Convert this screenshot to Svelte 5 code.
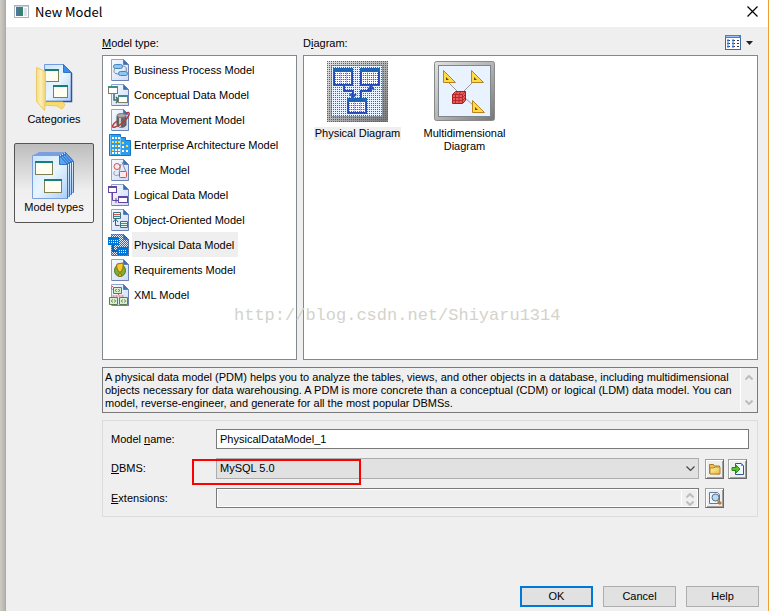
<script lang="ts">
  const types = [
    { id: 'process', label: 'Business Process Model' },
    { id: 'conceptual', label: 'Conceptual Data Model' },
    { id: 'movement', label: 'Data Movement Model' },
    { id: 'enterprise', label: 'Enterprise Architecture Model' },
    { id: 'free', label: 'Free Model' },
    { id: 'logical', label: 'Logical Data Model' },
    { id: 'object', label: 'Object-Oriented Model' },
    { id: 'physical', label: 'Physical Data Model' },
    { id: 'requirements', label: 'Requirements Model' },
    { id: 'xml', label: 'XML Model' }
  ];

  let tab = $state('types');
  let selected = $state('physical');
  let diagram = $state('physical');
  let modelName = $state('PhysicalDataModel_1');
  let dbms = $state('MySQL 5.0');
  let extensions = $state('');
</script>

<!-- Small framed window with a coloured title strip, shared by most icons -->
{#snippet box(x: number, y: number, w: number, h: number, edge: string, bar: string, fill = '#fff')}
  <rect x={x + 0.5} y={y + 0.5} width={w - 1} height={h - 1} {fill} stroke={edge} />
  <rect {x} {y} width={w} height="2" fill={bar} />
{/snippet}

{#snippet table(x: number, y: number, h: number)}
  <rect x={x + 1} y={y + 1} width="18" height={h - 2} fill="#fff" stroke="#2449b8" stroke-width="2" />
  <path d="M{x + 2} {y + 7.5}h16M{x + 2} {y + 11.5}h16M{x + 7.5} {y + 4}v{h - 6}M{x + 13.5} {y + 4}v{h - 6}" stroke="#c5c3f2" />
  <rect {x} {y} width="20" height="4" fill="#1c62b4" />
{/snippet}

{#snippet page()}
  <path d="M3.5 1.5h12l5 5v16h-17z" fill="url(#paper)" stroke="#8fa5cf" />
  <path d="M4 22.5h16.5V7" fill="none" stroke="#6f83b5" />
  <path d="M15.5 1.5l5 5h-5z" fill="#3b6fb5" stroke="#5d83bd" />
{/snippet}

{#snippet typeIcon(id: string)}
  <svg viewBox="0 0 24 24" width="24" height="24" aria-hidden="true">
    {#if id !== 'enterprise'}{@render page()}{/if}
    {#if id === 'process'}
      <path d="M7 10c-2 4-1 6 4 6M14 8c4 0 5 2 4 5" fill="none" stroke="#7d8794" />
      <rect x="5.5" y="6.500" width="9" height="4" rx="2" fill="#8cc8f4" stroke="#4584b8" />
      <rect x="10.500" y="13.500" width="9" height="4" rx="2" fill="#8cc8f4" stroke="#4584b8" />
    {:else if id === 'conceptual'}
      <path d="M6 11v6h4M8 14l2.500 3L8 20" fill="none" stroke="#3c6d6c" stroke-width="1.500" />
      {@render box(0, 3, 10, 8, '#7f8062', '#3f8d8b')}
      {@render box(10, 12, 10, 8, '#7f8062', '#3f8d8b')}
    {:else if id === 'movement'}
      <path d="M9 8v9c1 3 8 3 9 0V8z" fill="#666" stroke="#555" />
      <path d="M11 9v10h2V9z" fill="#c4c4c4" />
      <ellipse cx="13.500" cy="7.500" rx="4.500" ry="2" fill="#aaa" stroke="#777" />
      <path d="M9 13c-5 4-6 7-2 6 5-1 12-7 14-12 1-3-1-3-3-2" fill="none" stroke="#b93b3b" stroke-width="1.500" />
    {:else if id === 'enterprise'}
      <path d="M1.500 1.500h11v3h5v3h5v15h-21z" fill="#2b9dea" stroke="#1277c5" />
      <path d="M12.500 4v18M2.500 2v20" stroke="#70c7ff" />
      <g stroke-width="2" stroke-dasharray="2 1">
        <path d="M4 5h8M4 13h2M7 17h2M14 14h2M18 18h2" stroke="#fff" />
        <path d="M4 9h8M4 17h2M14 10h2M18 13h2M7 13h2" stroke="#ffd83a" />
        <path d="M10 13h2M10 17h2M14 18h2M4 20h8" stroke="#fff" />
      </g>
    {:else if id === 'free'}
      <path d="M13 6l-2 9M14 4l4 10" stroke="#8794a9" fill="none" />
      <circle cx="9" cy="8.500" r="3" fill="#fbe8ea" stroke="#d65252" />
      <path d="M7 13c-3 4 0 5 4 4" fill="none" stroke="#8e96a8" />
      <rect x="11.500" y="13.500" width="7" height="6" rx="1" fill="#fbe8ea" stroke="#d65252" />
    {:else if id === 'logical'}
      <path d="M4.500 10v7.500h6M8 15v5" fill="none" stroke="#6345a7" />
      {@render box(0, 3, 9, 7, '#6345a7', '#6345a7')}
      {@render box(10, 13, 10, 7, '#6345a7', '#6345a7')}
    {:else if id === 'object'}
      <path d="M7.500 11v6.500h4M5 14l2.500-3 2.500 3" fill="none" stroke="#315e91" />
      <path d="M5.500 4.500h7v6h-7zM12.500 13.500h7v6h-7z" fill="#e4f3f4" stroke="#3f727b" />
      <path d="M6 6.500h6M13 15.500h6" stroke="#df4f4b" />
      <path d="M6 8.500h6M13 17.500h6" stroke="#358894" />
    {:else if id === 'physical'}
      <path d="M3 1h13l5 5v17H3z" fill="url(#checker)" />
      <path d="M5 11v7h5" fill="none" stroke="#0a62b8" stroke-width="2" />
      <path d="M0.500 4.500h10v7h-10zM9.500 14.500h10v7h-10z" fill="#fff" stroke="#0a6cc8" />
      <path d="M0 4h11v3H0zM9 14h11v3H9z" fill="#0a6cc8" />
      <path d="M0 4h11v8H0zM9 14h11v8H9z" fill="url(#dense)" />
    {:else if id === 'requirements'}
      <ellipse cx="12" cy="12.500" rx="5.500" ry="6" fill="#7db032" stroke="#4f7718" />
      <path d="M9 6l6-1c1 4-1 7-2 9h-2c-2-3-3-5-2-8z" fill="#f7c92e" stroke="#8f6a16" />
      <circle cx="12" cy="17" r="1.500" fill="#f7c92e" stroke="#8f6a16" />
    {:else}
      <path d="M5 3L3 5l2 2M15 3l3 2-2 2M10.500 10v3M4.500 16v-3h11v3" fill="none" stroke="#c45656" stroke-dasharray="2 1" />
      <g fill="#d9efcd" stroke="#5c7d4e">
        <path d="M5.500 4.500h8v6h-8zM1.500 14.500h8v7h-8zM11.500 14.500h8v7h-8z" />
        <path d="M4.500 16.500l-1 1.500 1 1.500M6.500 16.500l1 1.500-1 1.500M14.500 16.500l-1 1.500 1 1.500M16.500 16.500l1 1.500-1 1.500" fill="none" />
        <path d="M8.500 6l-1 1.500 1 1.500M10.500 6l1 1.500-1 1.500" fill="none" stroke="#b34545" />
      </g>
    {/if}
  </svg>
{/snippet}

{#snippet chevron(down: boolean)}
  <svg viewBox="0 0 8 5" width="8" height="5" aria-hidden="true">
    <path d={down ? 'M0.500 0.500L4 4 7.500 0.500' : 'M0.500 4.500L4 1 7.500 4.500'} fill="none" stroke="#bdbdbd" stroke-width="2" />
  </svg>
{/snippet}

<svg class="defs" width="0" height="0" aria-hidden="true">
  <defs>
    <linearGradient id="paper" x1="0" y1="0" x2="1" y2="1">
      <stop offset="0" stop-color="#f7fbff" />
      <stop offset="1" stop-color="#cddcf7" />
    </linearGradient>
    <linearGradient id="sheet" x1="0" y1="0" x2="1" y2="1">
      <stop offset="0" stop-color="#c9e3ff" />
      <stop offset="0.500" stop-color="#e9f6ff" />
      <stop offset="1" stop-color="#a9cdf8" />
    </linearGradient>
    <linearGradient id="gold" x1="0" y1="0" x2="1" y2="1">
      <stop offset="0" stop-color="#fff5b9" />
      <stop offset="1" stop-color="#e6b83c" />
    </linearGradient>
    <linearGradient id="flap" x1="0" y1="0" x2="1" y2="0">
      <stop offset="0" stop-color="#f6dc83" />
      <stop offset="0.500" stop-color="#fdf0b5" />
      <stop offset="1" stop-color="#efcf6e" />
    </linearGradient>
    <linearGradient id="metal" x1="0" y1="0" x2="1" y2="1">
      <stop offset="0" stop-color="#e0e0e0" />
      <stop offset="0.500" stop-color="#b4b4b4" />
      <stop offset="1" stop-color="#777" />
    </linearGradient>
    <pattern id="sparse" width="2" height="2" patternUnits="userSpaceOnUse">
      <path d="M0 0h1v1H0z" fill="#0078d7" shape-rendering="crispEdges" />
    </pattern>
    <pattern id="checker" width="2" height="2" patternUnits="userSpaceOnUse">
      <path d="M0 0h1v1H0zM1 1h1v1H1z" fill="#0078d7" shape-rendering="crispEdges" />
    </pattern>
    <pattern id="dense" width="2" height="2" patternUnits="userSpaceOnUse">
      <path d="M0 0h2v1H1v1H0z" fill="#0078d7" shape-rendering="crispEdges" />
    </pattern>
  </defs>
</svg>

<div class="window">
  <header class="titlebar">
    <svg viewBox="0 0 15 13" width="15" height="13" aria-hidden="true">
      <rect x="0.500" y="0.500" width="14" height="12" fill="#fff" stroke="#a9b3bd" />
      <rect x="1" y="1" width="13" height="1" fill="#c9d3dc" />
      <rect x="2" y="2" width="7" height="9" fill="#35846f" />
      <rect x="2" y="2" width="3" height="9" fill="#4b7896" />
      <path d="M10 3h3v8h-3z" fill="#dfe4ea" />
    </svg>
    <h1>New Model</h1>
    <button class="close" aria-label="Close">
      <svg viewBox="0 0 11 11" width="11" height="11" aria-hidden="true">
        <path d="M0.500 0.500l10 10M10.500 0.500l-10 10" stroke="#000" stroke-width="1.200" />
      </svg>
    </button>
  </header>

  <div class="body">
    <nav class="sidebar">
      <button class="tab" class:active={tab === 'categories'} onclick={() => (tab = 'categories')}>
        <svg viewBox="0 0 48 48" width="48" height="48" aria-hidden="true">
          <path d="M14.500 1.500h19l8 8v29h-27z" fill="url(#sheet)" stroke="#6f9be0" />
          <path d="M15 38.500h26.500V10" fill="none" stroke="#334f9c" stroke-width="1.500" />
          <path d="M33.500 1.500l8 8h-8z" fill="#398ce8" stroke="#3474c6" />
          {@render box(15, 6, 14, 13, '#83804f', '#167f79', '#fffef0')}
          {@render box(23, 22, 15, 13, '#83804f', '#167f79', '#fffef0')}
          <path d="M12 39h21l2 3-3 4-5-3-15-1z" fill="#f8dc72" stroke="#edc95f" />
          <path d="M6.500 4.500l9 4v31l-1 8-8-9z" fill="url(#flap)" stroke="#ecca6c" />
        </svg>
        Categories
      </button>
      <button class="tab" class:active={tab === 'types'} onclick={() => (tab = 'types')}>
        <svg viewBox="0 0 48 48" width="48" height="48" aria-hidden="true">
          {#each [3, 2, 1, 0] as n}
            <path d="M{2.5 + n * 2} {4.5 - n}h27l8 9v{34 - n}h-35z" fill="url(#sheet)" stroke="#7c9fe0" />
            <path d="M{29.5 + n * 2} {4.5 - n}l8 9v{34 - n}" fill="none" stroke="#4269be" />
            <path d="M{29.5 + n * 2} {4.5 - n}l8 9h-8z" fill="#56a8f5" stroke="#3474c6" />
          {/each}
          {@render box(5, 10, 18, 14, '#83804f', '#167f79', '#fffef0')}
          {@render box(14, 28, 18, 14, '#83804f', '#167f79', '#fffef0')}
        </svg>
        Model types
      </button>
    </nav>

    <main>
      <div class="browser">
        <section>
          <div class="caption" id="type-label"><span><u>M</u>odel type:</span></div>
          <div class="list types" role="listbox" aria-labelledby="type-label">
            {#each types as type}
              <button class="type" class:selected={selected === type.id} role="option" aria-selected={selected === type.id} onclick={() => (selected = type.id)}>
                {@render typeIcon(type.id)}
                <span>{type.label}</span>
              </button>
            {/each}
          </div>
        </section>
        <section>
          <div class="caption">
            <span id="diagram-label">D<u>i</u>agram:</span>
            <button class="view" aria-label="Change view">
              <svg viewBox="0 0 28 15" width="28" height="15" aria-hidden="true">
                <rect x="0.500" y="0.500" width="15" height="14" fill="#fff" stroke="#41689b" />
                <path d="M0 0h16v3H0z" fill="#3f7ce5" />
                <path d="M1 1.500h13" stroke="#9dbff8" />
                <path d="M2 5.500h2M7 5.500h2M2 8.500h2M7 8.500h2M2 11.500h2M7 11.500h2" stroke="#3a6fd8" stroke-width="2" />
                <path d="M4 5.500h1M9 5.500h1M12 5.500h2M4 8.500h1M9 8.500h1M12 8.500h2M4 11.500h1M9 11.500h1M12 11.500h2" stroke="#333" />
                <path d="M21 6h7l-3.500 4z" fill="#222" />
              </svg>
            </button>
          </div>
          <div class="list diagrams" role="listbox" aria-labelledby="diagram-label">
            <button class="diagram" class:selected={diagram === 'physical'} role="option" aria-selected={diagram === 'physical'} onclick={() => (diagram = 'physical')}>
              <svg viewBox="0 0 61 61" width="61" height="61" aria-hidden="true">
                <rect width="61" height="61" rx="2" fill="url(#metal)" />
                <rect x="4.500" y="4.500" width="51" height="51" fill="#e8f3ff" stroke="#8b98a7" />
                {@render table(6, 7, 18)}
                {@render table(33, 7, 18)}
                {@render table(20, 37, 16)}
                <path d="M17 25v5h9v6M23 33l3 3 3-3M44 25v5H34v7M41 29l3-4 3 4" fill="none" stroke="#2449b8" stroke-width="2" />
                <rect width="61" height="61" fill="url(#sparse)" />
              </svg>
              <span>Physical Diagram</span>
            </button>
            <button class="diagram" class:selected={diagram === 'multi'} role="option" aria-selected={diagram === 'multi'} onclick={() => (diagram = 'multi')}>
              <svg viewBox="0 0 61 61" width="61" height="61" aria-hidden="true">
                <rect x="0.500" y="0.500" width="60" height="59" rx="2" fill="url(#metal)" stroke="#8a8a8a" />
                <rect x="4.500" y="4.500" width="52" height="51" fill="#e8f3ff" stroke="#7f858c" />
                <path d="M14 21l11 11M39 21L29 31M30 36l10 9" stroke="#999" />
                <path d="M9.500 9.500v12h12zM37.500 9.500v12h12zM38.500 39.500v12h12z" fill="#ffda42" stroke="#b98221" stroke-linejoin="round" />
                <path d="M12 16v3h3zM40 16v3h3zM41 46v3h3z" fill="#69480c" />
                <path d="M18.500 33.500l3-3h10v9l-3 3h-10z" fill="#f05a5a" stroke="#9c2222" />
                <path d="M18.500 33.500h10l3-3M28.500 33.500v9M21.500 33v9M25 33v9M18 36.500h10.500l3-3M18 39.500h10.500l3-3M21.500 33l3-3M25 33l3-3" fill="none" stroke="#b02c2c" />
              </svg>
              <span>Multidimensional Diagram</span>
            </button>
          </div>
        </section>
        <div class="watermark">http://blog.csdn.net/Shiyaru1314</div>
      </div>

      <div class="description">
        <p>A physical data model (PDM) helps you to analyze the tables, views, and other objects in a database, including multidimensional objects necessary for data warehousing. A PDM is more concrete than a conceptual (CDM) or logical (LDM) data model. You can model, reverse-engineer, and generate for all the most popular DBMSs.</p>
        <div class="scroll">{@render chevron(false)}{@render chevron(true)}</div>
      </div>

      <div class="fields">
        <div class="row">
          <label for="name">Model <u>n</u>ame:</label>
          <input id="name" type="text" bind:value={modelName} />
        </div>
        <div class="row">
          <label for="dbms"><u>D</u>BMS:</label>
          <div class="combo">
            <select id="dbms" bind:value={dbms}>
              <option>MySQL 5.0</option>
            </select>
            <svg viewBox="0 0 9 6" width="9" height="6" aria-hidden="true">
              <path d="M0.500 0.500l4 4 4-4" fill="none" stroke="#444" stroke-width="1.200" />
            </svg>
          </div>
          <div class="tools">
            <button class="tool" aria-label="Browse">
              <svg viewBox="0 0 14 14" width="14" height="14" aria-hidden="true">
                <path d="M1.500 11.500v-9h4l1 1.500h5v8z" fill="#f0c24a" stroke="#a97b20" />
                <path d="M2 12V6h4l1-1h5v7z" fill="url(#gold)" stroke="#b98321" />
              </svg>
            </button>
            <button class="tool" aria-label="Import">
              <svg viewBox="0 0 14 14" width="14" height="14" aria-hidden="true">
                <path d="M4.500 1.500h6l2 2v9h-8z" fill="#f4f9ff" stroke="#33558f" />
                <path d="M10 1v3h3z" fill="#5d9be8" />
                <path d="M1 5.500h4V3l4 4-4 4V8.500H1z" fill="#58c332" stroke="#2b8b1c" />
              </svg>
            </button>
          </div>
        </div>
        <div class="row">
          <label for="extensions"><u>E</u>xtensions:</label>
          <div class="extensions">
            <input id="extensions" type="text" bind:value={extensions} readonly />
            <div class="scroll">{@render chevron(false)}{@render chevron(true)}</div>
          </div>
          <div class="tools">
            <button class="tool" aria-label="Select extensions">
              <svg viewBox="0 0 14 14" width="14" height="14" aria-hidden="true">
                <path d="M1.500 1.500h8l2 2v9h-10z" fill="#edf5ff" stroke="#6178a0" />
                <path d="M10 10l3 3" stroke="#c0782e" stroke-width="3" />
                <circle cx="7.500" cy="6.500" r="3.500" fill="#b8dcf5" stroke="#5a6c80" />
              </svg>
            </button>
          </div>
        </div>
        <div class="highlight"></div>
      </div>
    </main>
  </div>

  <footer>
    <button class="primary">OK</button>
    <button>Cancel</button>
    <button>Help</button>
  </footer>
</div>

<style>
  :global(body) {
    margin: 0;
    background: #efefef;
  }

  .defs {
    position: absolute;
  }

  .window,
  button,
  input,
  select {
    font-family: 'Liberation Sans', Arial, sans-serif;
    font-size: 11px;
    line-height: 13px;
    color: #000;
  }

  .window {
    box-sizing: border-box;
    min-height: 100vh;
    display: flex;
    flex-direction: column;
    background:
      linear-gradient(#f0a030, #f0a030) 5px 0 / 1px 100% no-repeat,
      linear-gradient(90deg, #cfccc6, #b5b3ad) 0 0 / 5px 100% no-repeat,
      #efefef;
    border-right: 1px solid #f0a030;
    padding-left: 6px;
  }

  button {
    box-sizing: border-box;
    margin: 0;
    padding: 0;
    border: 0;
    background: none;
  }

  svg {
    display: block;
    flex: none;
  }

  .titlebar {
    height: 27px;
    box-sizing: border-box;
    padding: 0 10px 4px 8px;
    display: flex;
    align-items: center;
    gap: 6px;
    background: #fff;
  }

  h1 {
    margin: 0;
    flex: 1;
    font: 13px/20px 'Noto Sans CJK SC', sans-serif;
  }

  .body {
    display: flex;
    gap: 8px;
    padding: 8px 10px 0 8px;
  }

  .sidebar {
    width: 80px;
    flex: none;
    display: flex;
    flex-direction: column;
    gap: 8px;
    padding-top: 20px;
  }

  .tab {
    height: 80px;
    display: flex;
    flex-direction: column;
    align-items: center;
    padding-top: 7px;
    gap: 2px;
    border: 1px solid transparent;
    border-radius: 2px;
  }

  .tab.active {
    border-color: #555;
    background: linear-gradient(#bdbdbd, #efefef 60%, #f4f4f4);
  }

  main {
    flex: 1;
    min-width: 0;
  }

  .browser {
    position: relative;
    display: grid;
    grid-template-columns: minmax(0, 3fr) minmax(0, 7fr);
    gap: 6px;
  }

  .caption {
    height: 20px;
    display: flex;
    justify-content: space-between;
    line-height: 16px;
  }

  .view {
    align-self: flex-start;
    padding-right: 5px;
  }

  .list {
    box-sizing: border-box;
    min-height: 305px;
    background: #fff;
    border: 1px solid #828790;
  }

  .types {
    padding: 1px 5px;
  }

  .type {
    width: 100%;
    height: 25px;
    display: flex;
    align-items: center;
    text-align: left;
  }

  .type span {
    line-height: 24px;
    padding: 1px 4px 0 2px;
    white-space: nowrap;
  }

  .selected span {
    background: #efefef;
  }

  .diagrams {
    display: flex;
    align-items: flex-start;
    padding: 5px 0;
  }

  .diagram {
    width: 107px;
    display: flex;
    flex-direction: column;
    align-items: center;
    gap: 5px;
  }

  .diagram span {
    max-width: 90px;
    padding: 0 1px;
  }

  .watermark {
    position: absolute;
    left: 132px;
    bottom: 34px;
    font: 17px/20px 'Liberation Mono', monospace;
    color: #d3d3cb;
    pointer-events: none;
  }

  .description {
    box-sizing: border-box;
    min-height: 46px;
    margin-top: 7px;
    display: flex;
    border: 1px solid #7a7a7a;
    background: #efefef;
  }

  .description p {
    flex: 1;
    margin: 0;
    padding: 3px 0 0 2px;
  }

  .scroll {
    width: 17px;
    flex: none;
    display: flex;
    flex-direction: column;
    align-items: center;
    justify-content: space-between;
    box-sizing: border-box;
    padding: 7px 0;
    border-left: 1px solid #fff;
  }

  .fields {
    position: relative;
    margin-top: 7px;
    padding: 8px;
    display: flex;
    flex-direction: column;
    gap: 9px;
    border: 1px solid #dcdcdc;
  }

  .row {
    display: flex;
    align-items: center;
  }

  label {
    width: 105px;
    flex: none;
  }

  input,
  select {
    box-sizing: border-box;
    flex: 1;
    width: 100%;
    min-width: 0;
    height: 20px;
    margin: 0;
    padding: 0 3px;
    border: 1px solid #7a7a7a;
    border-radius: 0;
    background: #fff;
  }

  .combo,
  .extensions {
    flex: 1;
    min-width: 0;
    display: grid;
    align-items: center;
  }

  .combo > *,
  .extensions > * {
    grid-area: 1 / 1;
  }

  .combo svg {
    justify-self: end;
    margin-right: 4px;
    pointer-events: none;
  }

  select {
    appearance: none;
    height: 21px;
    border-color: #adadad;
    background: #e1e1e1;
  }

  .extensions input {
    background: #efefef;
    box-shadow: inset 0 0 0 1px #fff;
  }

  .extensions .scroll {
    justify-self: end;
    height: 18px;
    padding: 4px 0 1px;
    margin-right: 1px;
  }

  .tools {
    width: 44px;
    margin-left: 6px;
    display: flex;
    gap: 4px;
  }

  .tool {
    width: 19px;
    height: 20px;
    display: grid;
    place-items: center;
    border: 1px solid;
    border-color: #a0a0a0 #696969 #696969 #a0a0a0;
    box-shadow: inset 1px 1px #fff, inset -1px -1px #a0a0a0;
  }

  /* Red marker around the chosen DBMS */
  .highlight {
    position: absolute;
    box-sizing: border-box;
    left: 89px;
    top: 38px;
    width: 169px;
    height: 26px;
    border: 2px solid #f00;
    pointer-events: none;
  }

  footer {
    margin-top: auto;
    padding: 0 9px 4px;
    display: flex;
    justify-content: flex-end;
    gap: 10px;
  }

  footer button {
    width: 73px;
    height: 21px;
    border: 1px solid #adadad;
    background: #e1e1e1;
  }

  footer .primary {
    border: 2px solid #0078d7;
  }
</style>
